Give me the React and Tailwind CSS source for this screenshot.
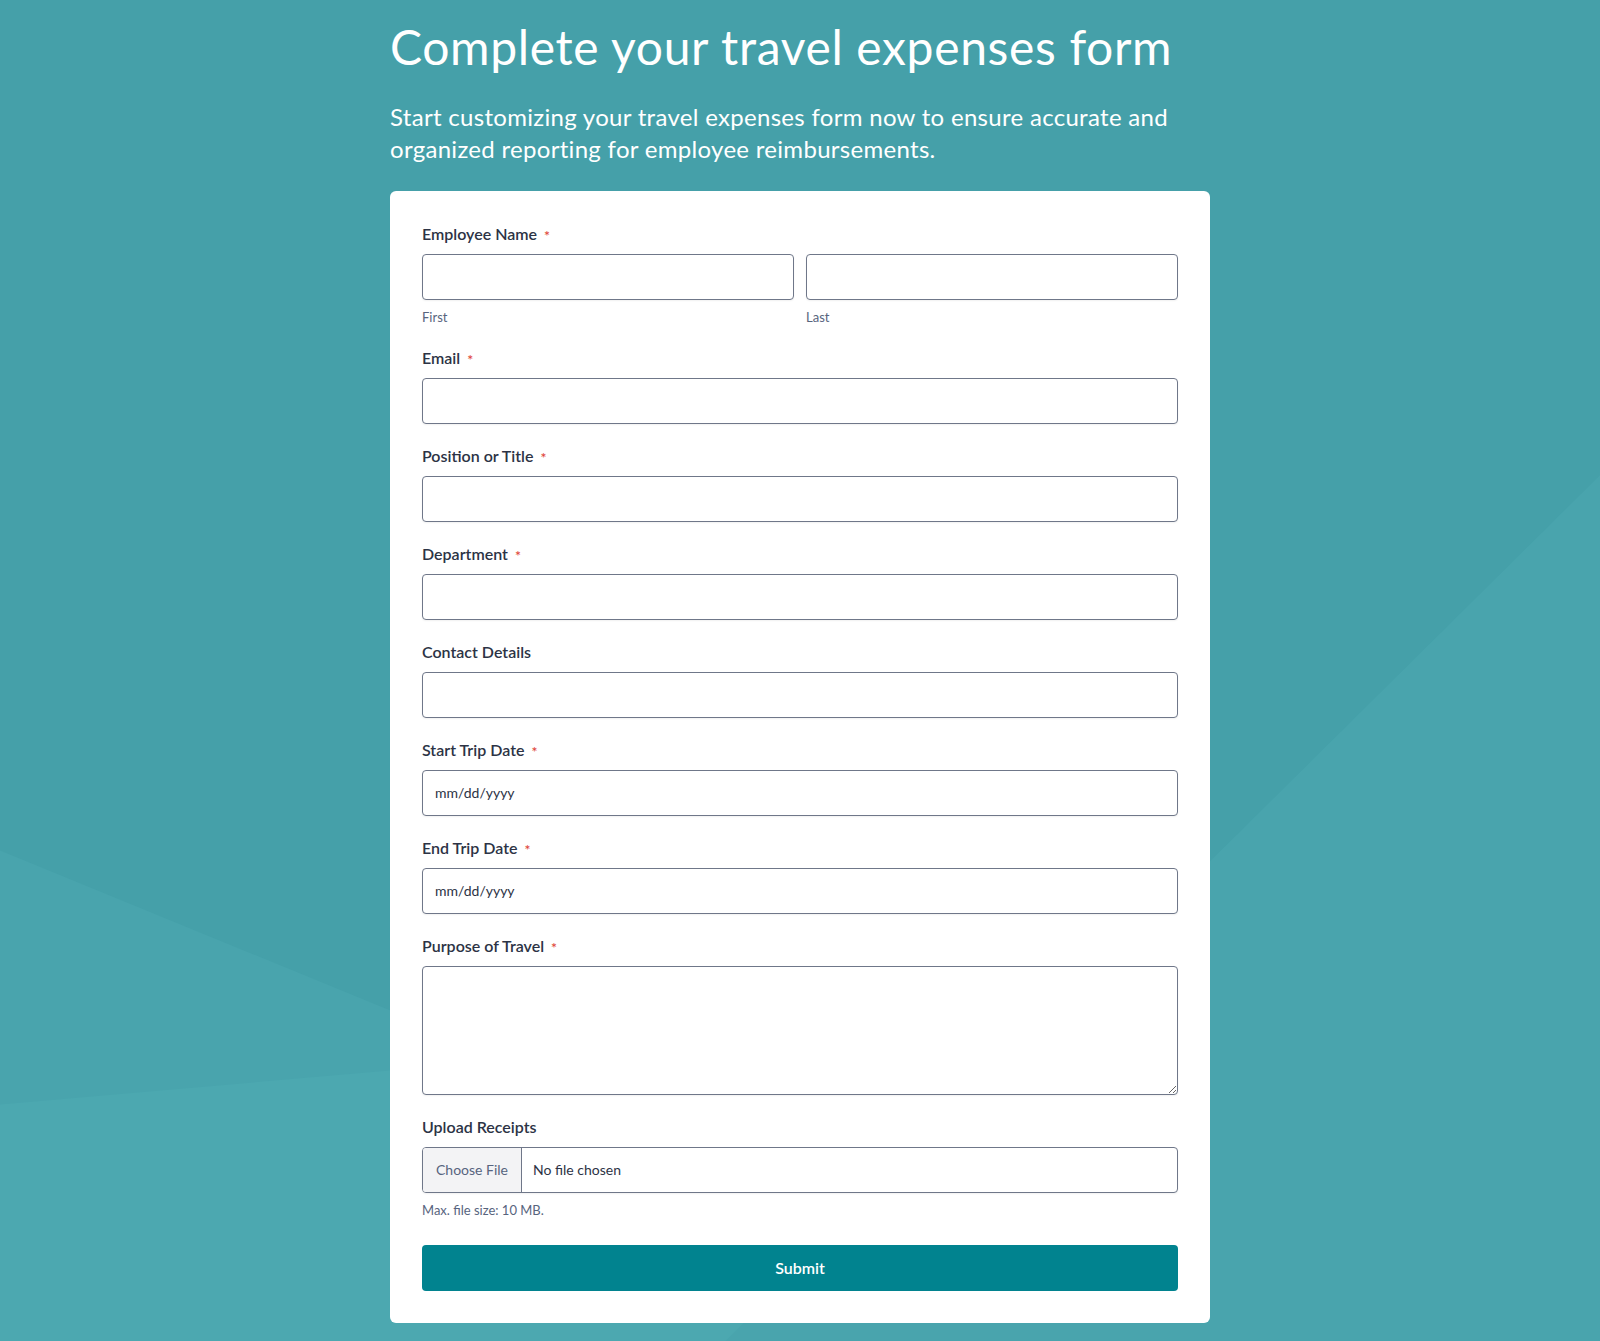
const Required = () => (
  <span className="relative top-[1px] ml-[7px] text-[14px] leading-none text-[#e0483b]">*</span>
);

const Label = ({ children, required }) => (
  <label className="flex items-baseline text-[16px] leading-[20px] font-semibold text-[#2c3345]">
    {children}
    {required && <Required />}
  </label>
);

const inputClass =
  'block w-full h-[46px] rounded-[4px] border border-[#6f7789] bg-white px-[12px] text-[14px] text-[#2c3345] shadow-[0_1px_2px_rgba(0,0,0,0.06)] outline-none';

const Field = ({ label, required, children }) => (
  <div className="flex flex-col gap-[10px]">
    <Label required={required}>{label}</Label>
    {children}
  </div>
);

const Background = () => (
  <svg
    className="absolute inset-0 w-full h-full"
    viewBox="0 0 1600 1341"
    preserveAspectRatio="none"
    aria-hidden="true"
  >
    <rect width="1600" height="1341" fill="#45a0a9" />
    <polygon points="0,850 1000,1260 1000,1341 0,1341" fill="#49a4ad" />
    <polygon points="0,1104 390,1070 1000,1030 1000,1341 0,1341" fill="#4ca8b0" />
    <polygon points="1600,475 1600,1341 725,1341" fill="#49a4ad" />
  </svg>
);

export default function App() {
  return (
    <div className="relative min-h-[1341px] w-full overflow-hidden font-['Lato',sans-serif]">
      <Background />
      <div className="relative mx-auto w-[820px] pt-[18px] pb-[19px]">
        <h1 className="text-[48px] leading-[1.2] font-normal tracking-[0.65px] text-white">
          Complete your travel expenses form
        </h1>
        <p className="mt-[25px] text-[24px] leading-[32px] tracking-[0.3px] text-white">
          Start customizing your travel expenses form now to ensure accurate and organized reporting for employee reimbursements.
        </p>

        <form className="mt-[26px] rounded-md bg-white px-[32px] pt-[33px] pb-[32px]">
          <div className="flex flex-col gap-[22px]">
            <Field label="Employee Name" required>
              <div className="grid grid-cols-2 gap-[12px]">
                <div className="flex flex-col gap-[9px]">
                  <input className={inputClass} type="text" />
                  <span className="text-[13px] leading-[17px] text-[#57647e]">First</span>
                </div>
                <div className="flex flex-col gap-[9px]">
                  <input className={inputClass} type="text" />
                  <span className="text-[13px] leading-[17px] text-[#57647e]">Last</span>
                </div>
              </div>
            </Field>

            <Field label="Email" required>
              <input className={inputClass} type="email" />
            </Field>

            <Field label="Position or Title" required>
              <input className={inputClass} type="text" />
            </Field>

            <Field label="Department" required>
              <input className={inputClass} type="text" />
            </Field>

            <Field label="Contact Details">
              <input className={inputClass} type="text" />
            </Field>

            <Field label="Start Trip Date" required>
              <input
                className={inputClass + ' placeholder:text-[#2c3345]'}
                type="text"
                placeholder="mm/dd/yyyy"
              />
            </Field>

            <Field label="End Trip Date" required>
              <input
                className={inputClass + ' placeholder:text-[#2c3345]'}
                type="text"
                placeholder="mm/dd/yyyy"
              />
            </Field>

            <Field label="Purpose of Travel" required>
              <textarea className="block w-full h-[129px] rounded-[4px] border border-[#6f7789] bg-white px-[12px] py-[10px] text-[14px] text-[#2c3345] shadow-[0_1px_2px_rgba(0,0,0,0.06)] outline-none" />
            </Field>

            <div className="flex flex-col">
              <Label>Upload Receipts</Label>
              <div className="mt-[10px] flex h-[46px] w-full overflow-hidden rounded-[4px] border border-[#6f7789] bg-white shadow-[0_1px_2px_rgba(0,0,0,0.06)]">
                <div className="flex w-[99px] items-center justify-center border-r border-[#6f7789] bg-[#f3f3f5] text-[14px] text-[#57647e]">
                  Choose File
                </div>
                <div className="flex items-center pl-[11px] text-[14px] text-[#2c3345]">No file chosen</div>
              </div>
              <span className="mt-[9px] text-[13px] leading-[17px] text-[#57647e]">Max. file size: 10 MB.</span>
              <button
                type="button"
                className="mt-[26px] h-[46px] w-full rounded-[4px] bg-[#01838f] text-[16px] font-semibold text-white"
              >
                Submit
              </button>
            </div>
          </div>
        </form>
      </div>
    </div>
  );
}
